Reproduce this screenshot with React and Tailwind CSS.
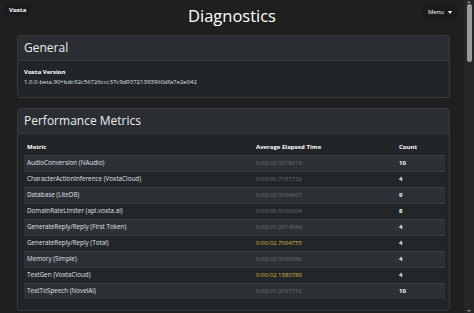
import React from "react";

const metrics = [
  ["AudioConversion (NAudio)", "0:00:00.0018619", 10, false],
  ["CharacterActionInference (VoxtaCloud)", "0:00:00.7151732", 4, false],
  ["Database (LiteDB)", "0:00:00.0004667", 9, false],
  ["DomainRateLimiter (api.voxta.ai)", "0:00:00.0000004", 8, false],
  ["GenerateReply/Reply (First Token)", "0:00:01.2514884", 4, false],
  ["GenerateReply/Reply (Total)", "0:00:02.7004755", 4, true],
  ["Memory (Simple)", "0:00:00.0000086", 4, false],
  ["TextGen (VoxtaCloud)", "0:00:02.1380788", 4, true],
  ["TextToSpeech (NovelAI)", "0:00:01.2597752", 10, false],
];

function Card({ title, children }) {
  return (
    <section className="w-[433px] ml-[17px] border border-[#36393d] rounded-[3px] bg-[#222528] overflow-hidden">
      <div className="h-[25px] flex items-center px-[6px] bg-[#2a2d31] border-b border-[#36393d]">
        <h2 className="text-[12px] leading-none text-[#eceff1]">{title}</h2>
      </div>
      {children}
    </section>
  );
}

export default function App() {
  return (
    <div
      className="w-[474px] h-[313px] overflow-hidden bg-[#1f1f1f] flex text-[#e4e6e8]"
      style={{ fontFamily: '"Open Sans", "Noto Sans", sans-serif' }}
    >
      <main className="w-[464px] flex flex-col">
        <header className="h-[35px] relative flex items-start justify-between px-[5px] pt-[4px]">
          <div className="px-[4px] py-[3px] rounded-[2px] bg-[#1b1b1b] text-[6px] font-bold leading-none text-white">
            Voxta
          </div>
          <h1 className="absolute left-0 right-0 top-[8px] text-center text-[16.5px] leading-none font-medium text-white">
            Diagnostics
          </h1>
          <div className="mr-[1px] px-[6px] py-[5px] rounded-[2px] bg-[#1b1b1c] text-[6px] leading-none text-white flex items-center gap-[4px]">
            Menu
            <span className="block w-0 h-0 border-l-[2.5px] border-r-[2.5px] border-t-[3px] border-l-transparent border-r-transparent border-t-white" />
          </div>
        </header>

        <Card title="General">
          <div className="px-[6px] pt-[7px] pb-[10px]">
            <div className="text-[6px] font-bold leading-[9px] text-white">Voxta Version</div>
            <div className="text-[6px] leading-[10px] text-[#dfe2e5]">
              1.0.0-beta.90+bdc92c56726ccc37c9d93721393960dfa7e2e042
            </div>
          </div>
        </Card>

        <div className="h-[10px]" />

        <Card title="Performance Metrics">
          <div className="px-[6px] pt-[6px] pb-[11px]">
            <table className="w-[421px] border-collapse text-[6px] leading-none">
              <thead>
                <tr className="h-[15px] text-white font-bold text-left">
                  <th className="w-[229px] pl-[3px] font-bold">Metric</th>
                  <th className="w-[143px] pl-[3px] font-bold">Average Elapsed Time</th>
                  <th className="pl-[3px] font-bold">Count</th>
                </tr>
              </thead>
              <tbody>
                {metrics.map(([name, time, count, slow], i) => (
                  <tr
                    key={name}
                    className={
                      "h-[16px] border-t border-[#3a3d41] " +
                      (i % 2 === 0 ? "bg-[#2d3034]" : "bg-[#232629]")
                    }
                  >
                    <td className="pl-[3px] text-[6.3px] text-[#dfe2e5]">{name}</td>
                    <td className={"pl-[3px] " + (slow ? "text-[#d9b545]" : "text-[#6b7075]")}>
                      {time}
                    </td>
                    <td className="pl-[3px] font-bold text-[#f5f5f5]">{count}</td>
                  </tr>
                ))}
              </tbody>
            </table>
          </div>
        </Card>
      </main>

      <div className="w-[10px] h-full bg-[#262626] flex flex-col items-center">
        <div className="mt-[1px] w-0 h-0 border-l-[2px] border-r-[2px] border-b-[2px] border-l-transparent border-r-transparent border-b-[#9a9a9a]" />
        <div className="mt-[1px] w-[5px] h-[58px] rounded-[3px] bg-[#9b9b9b]" />
        <div className="flex-1" />
        <div className="mb-[1px] w-0 h-0 border-l-[2px] border-r-[2px] border-t-[2px] border-l-transparent border-r-transparent border-t-[#9a9a9a]" />
      </div>
    </div>
  );
}
